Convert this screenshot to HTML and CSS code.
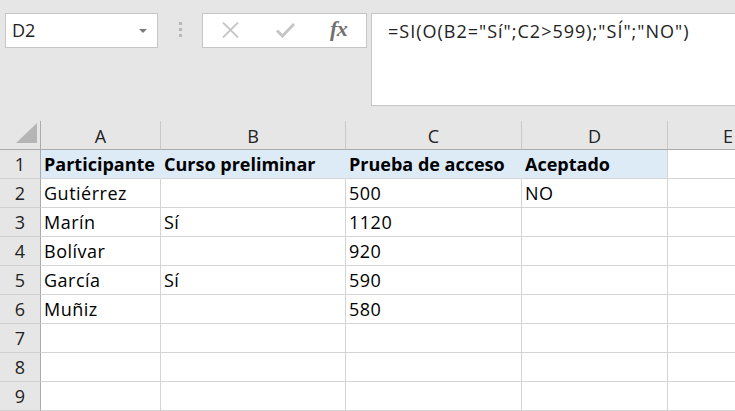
FILE: index.html
```html
<!DOCTYPE html>
<html lang="es">
<head>
<meta charset="utf-8">
<title>Hoja</title>
<link rel="stylesheet" href="styles.css">
</head>
<body>
<div class="app">
  <div class="topbar">
    <div class="namebox">
      <span class="name">D2</span>
      <svg class="caret" width="8" height="4" viewBox="0 0 8 4"><polygon points="0,0 8,0 4,4" fill="#7a7a7a"/></svg>
    </div>
    <div class="grip">
      <span class="dot"></span><span class="dot"></span><span class="dot"></span>
    </div>
    <div class="fbuttons">
      <svg class="ico-x" width="17" height="16" viewBox="0 0 17 16"><path d="M1 0.5 L16 15.5 M16 0.5 L1 15.5" stroke="#c6c6c6" stroke-width="1.8" fill="none"/></svg>
      <svg class="ico-ok" width="19" height="15" viewBox="0 0 19 15"><path d="M1 7.5 L6.5 13 L18 1" stroke="#c6c6c6" stroke-width="3" fill="none"/></svg>
      <span class="fx">fx</span>
    </div>
    <div class="formula">=SI(O(B2="Sí";C2&gt;599);"SÍ";"NO")</div>
  </div>

  <div class="sheet">
    <div class="corner"><svg width="21" height="20" viewBox="0 0 21 20"><polygon points="0,20 21,20 21,0" fill="#b5b5b5"/></svg></div>
    <div class="colh">A</div>
    <div class="colh">B</div>
    <div class="colh">C</div>
    <div class="colh">D</div>
    <div class="colh last">E</div>

    <div class="rowh">1</div>
    <div class="cell head">Participante</div>
    <div class="cell head">Curso preliminar</div>
    <div class="cell head">Prueba de acceso</div>
    <div class="cell head end">Aceptado</div>
    <div class="cell last"></div>

    <div class="rowh">2</div>
    <div class="cell">Gutiérrez</div>
    <div class="cell"></div>
    <div class="cell">500</div>
    <div class="cell">NO</div>
    <div class="cell last"></div>

    <div class="rowh">3</div>
    <div class="cell">Marín</div>
    <div class="cell">Sí</div>
    <div class="cell">1120</div>
    <div class="cell"></div>
    <div class="cell last"></div>

    <div class="rowh">4</div>
    <div class="cell">Bolívar</div>
    <div class="cell"></div>
    <div class="cell">920</div>
    <div class="cell"></div>
    <div class="cell last"></div>

    <div class="rowh">5</div>
    <div class="cell">García</div>
    <div class="cell">Sí</div>
    <div class="cell">590</div>
    <div class="cell"></div>
    <div class="cell last"></div>

    <div class="rowh">6</div>
    <div class="cell">Muñiz</div>
    <div class="cell"></div>
    <div class="cell">580</div>
    <div class="cell"></div>
    <div class="cell last"></div>

    <div class="rowh">7</div>
    <div class="cell"></div><div class="cell"></div><div class="cell"></div><div class="cell"></div><div class="cell last"></div>

    <div class="rowh">8</div>
    <div class="cell"></div><div class="cell"></div><div class="cell"></div><div class="cell"></div><div class="cell last"></div>

    <div class="rowh">9</div>
    <div class="cell"></div><div class="cell"></div><div class="cell"></div><div class="cell"></div><div class="cell last"></div>
  </div>
</div>
</body>
</html>
```

FILE: styles.css
```css
* { box-sizing: border-box; }
html, body {
  margin: 0;
  padding: 0;
  background: #e6e6e6;
  overflow: hidden;
  width: 735px;
  height: 411px;
}
body {
  font-family: "Open Sans", "Noto Sans", sans-serif;
  color: #000;
}
.app { width: 735px; overflow: hidden; }

.topbar {
  display: flex;
  align-items: flex-start;
  padding: 13px 0 0 5px;
  height: 121px;
}
.topbar > * { flex: none; }
.namebox {
  width: 153px;
  height: 35px;
  background: #fff;
  border: 1px solid #c6c6c6;
  display: flex;
  align-items: center;
  justify-content: space-between;
  padding: 0 10px 1px 6px;
}
.name {
  font-size: 18px;
  color: #222;
}
.caret { margin-top: 1px; }
.grip {
  width: 44px;
  height: 35px;
  display: flex;
  flex-direction: column;
  align-items: center;
  justify-content: center;
  gap: 3px;
  padding-left: 1px;
  padding-bottom: 2px;
}
.dot {
  width: 3px;
  height: 3px;
  background: #b8b8b8;
}
.fbuttons {
  width: 165px;
  height: 35px;
  background: #fff;
  border: 1px solid #c6c6c6;
  display: flex;
  align-items: center;
  padding-left: 19px;
  padding-bottom: 1px;
}
.ico-x { margin-right: 37px; }
.ico-ok { margin-right: 35px; }
.fx {
  font-family: "Liberation Serif", "DejaVu Serif", serif;
  font-style: italic;
  font-weight: 700;
  font-size: 22px;
  color: #707070;
  letter-spacing: -0.5px;
  margin-top: -3px;
}
.formula {
  margin-left: 4px;
  width: 420px;
  height: 93px;
  background: #fff;
  border: 1px solid #c6c6c6;
  padding: 5px 0 0 16px;
  font-size: 18px;
  letter-spacing: 1px;
  color: #222;
  white-space: nowrap;
}

.sheet {
  display: grid;
  grid-template-columns: 41px 120px 185px 176px 146px 1fr;
  grid-auto-rows: 29px;
  font-size: 18px;
}
.corner, .colh, .rowh {
  background: #e6e6e6;
}
.corner {
  border-right: 1px solid #ababab;
  border-bottom: 1px solid #ababab;
  display: flex;
  align-items: flex-end;
  justify-content: flex-end;
  padding: 0 3px 6px 0;
}
.colh {
  border-right: 1px solid #c8c8c8;
  border-bottom: 1px solid #ababab;
  text-align: center;
  line-height: 30px;
  color: #222;
}
.colh.last { border-right: none; text-align: left; padding-left: 55px; }
.rowh {
  border-right: 1px solid #ababab;
  border-bottom: 1px solid #d0d0d0;
  text-align: center;
  line-height: 29px;
  color: #222;
}
.cell {
  background: #fff;
  border-right: 1px solid #d4d4d4;
  border-bottom: 1px solid #d4d4d4;
  padding: 0 0 0 3px;
  line-height: 29px;
  letter-spacing: 0.5px;
  white-space: nowrap;
  overflow: hidden;
}
.cell.last { border-right: none; }
.cell.head {
  background: #ddebf7;
  font-weight: 700;
  letter-spacing: 0;
  border-right-color: #ddebf7;
  border-bottom-color: #d4d4d4;
}
.cell.head.end { border-right-color: #d4d4d4; }
```
